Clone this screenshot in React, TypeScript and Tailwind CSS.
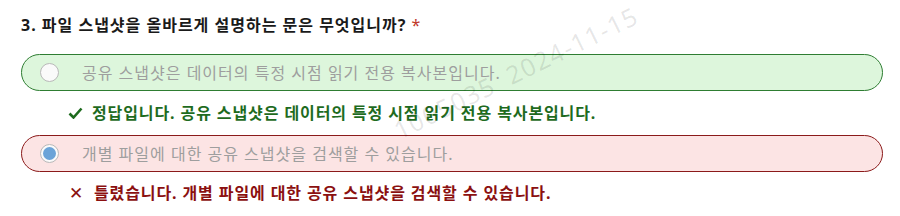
import React from "react";

const font = { fontFamily: '"Noto Sans", "Noto Sans CJK KR", sans-serif' };

function Radio({ checked }: { checked?: boolean }) {
  return (
    <span className="flex h-[19px] w-[19px] shrink-0 items-center justify-center rounded-full border border-[#b9b9b9] bg-[#fafafa]">
      {checked && <span className="h-[13px] w-[13px] rounded-full bg-[#6aa3d8]" />}
    </span>
  );
}

export default function App() {
  return (
    <div className="relative h-[216px] w-[900px] overflow-hidden bg-white" style={font}>
      <div className="px-[21px] pt-[13px]">
        <div className="text-[16px] font-bold tracking-[1px] text-[#1a1a1a] leading-[24px]">
          3. 파일 스냅샷을 올바르게 설명하는 문은 무엇입니까? <span className="text-[#c0392b] font-normal">*</span>
        </div>

        <div className="mt-[17px] flex h-[37px] w-[862px] items-center gap-[23px] rounded-full border border-[#2e7d32] bg-[#ddf6dc] pl-[18px]">
          <Radio />
          <span className="text-[16px] tracking-[1px] text-[#9e9e9e]">공유 스냅샷은 데이터의 특정 시점 읽기 전용 복사본입니다.</span>
        </div>

        <div className="mt-[9px] flex h-[25px] items-center gap-[9px] pl-[47px] text-[16px] font-bold tracking-[0.9px] text-[#1e6b1e]">
          <svg width="15" height="12" viewBox="0 0 15 12">
            <path d="M1.5 6.5 L5.5 10.5 L13.5 1.5" fill="none" stroke="#1e6b1e" strokeWidth="2.6" />
          </svg>
          <span>정답입니다. 공유 스냅샷은 데이터의 특정 시점 읽기 전용 복사본입니다.</span>
        </div>

        <div className="mt-[10px] flex h-[37px] w-[862px] items-center gap-[23px] rounded-full border border-[#8b1a1a] bg-[#fce4e4] pl-[18px]">
          <Radio checked />
          <span className="text-[16px] tracking-[1px] text-[#9e9e9e]">개별 파일에 대한 공유 스냅샷을 검색할 수 있습니다.</span>
        </div>

        <div className="mt-[8px] flex h-[25px] items-center gap-[10px] pl-[48px] text-[16px] font-bold tracking-[0.9px] text-[#8b1010]">
          <span className="font-normal text-[17px] leading-none">✕</span>
          <span>틀렸습니다. 개별 파일에 대한 공유 스냅샷을 검색할 수 있습니다.</span>
        </div>
      </div>

      <div
        className="pointer-events-none absolute left-[395px] top-[116px] text-[25px] tracking-[1.3px] text-black/10 whitespace-nowrap leading-[30px]"
        style={{ transform: "rotate(-26deg)", transformOrigin: "left center" }}
      >
        1005035&nbsp; 2024-11-15
      </div>
    </div>
  );
}
